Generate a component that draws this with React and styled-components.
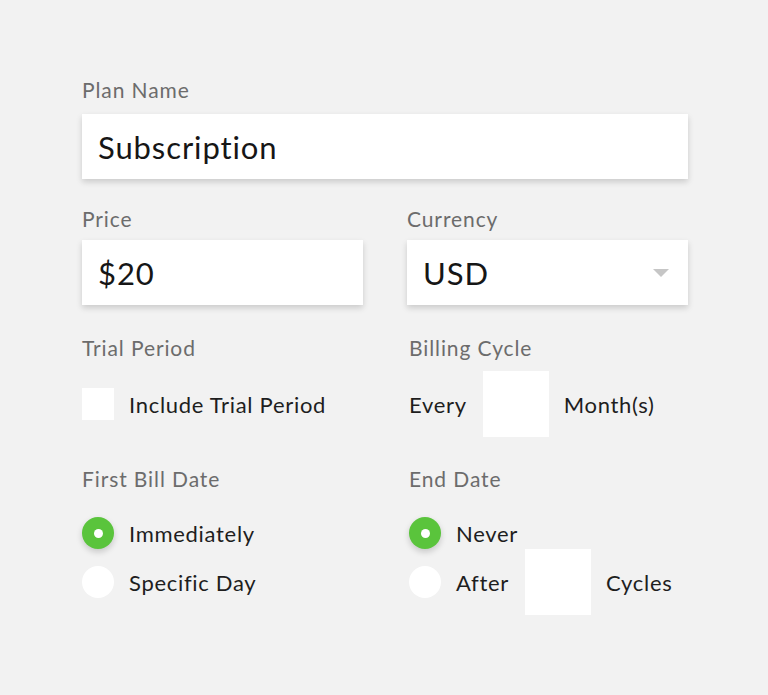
import React from "react";
import styled, { createGlobalStyle } from "styled-components";

const GlobalStyle = createGlobalStyle`
  * {
    box-sizing: border-box;
  }

  body {
    margin: 0;
    background: #f2f2f2;
    font-family: Lato, "Noto Sans", sans-serif;
  }
`;

const Page = styled.div`
  min-height: 695px;
  background: #f2f2f2;
  padding: 78px 0 0 82px;
`;

const Form = styled.form`
  width: 606px;
`;

const Section = styled.div`
  margin-top: ${(p) => p.$top || 0}px;
`;

const Columns = styled.div`
  display: grid;
  grid-template-columns: 281px 281px;
  column-gap: 44px;
  margin-top: ${(p) => p.$top || 0}px;
`;

const Column = styled.div`
  padding-left: ${(p) => p.$inset || 0}px;
`;

const Label = styled.div`
  font-size: 21px;
  line-height: 24px;
  letter-spacing: 0.9px;
  color: #6c6c6c;
  margin-bottom: ${(p) => p.$gap || 10}px;
`;

const Field = styled.div`
  position: relative;
  height: 65px;
  background: #fff;
  box-shadow: 0 3px 6px rgba(0, 0, 0, 0.16);
  display: flex;
  align-items: center;
  padding: 0 16px;
  font-size: 31px;
  letter-spacing: 0.9px;
  color: #161616;
`;

const Caret = styled.span`
  margin-left: auto;
  margin-right: 3px;
  width: 0;
  height: 0;
  border-left: 8px solid transparent;
  border-right: 8px solid transparent;
  border-top: 8px solid #c6c6c6;
`;

const Row = styled.div`
  display: flex;
  align-items: center;
  height: ${(p) => p.$h || 32}px;
  font-size: 22px;
  letter-spacing: 0.7px;
  color: #1e1e1e;
`;

const Checkbox = styled.span`
  width: 32px;
  height: 32px;
  background: #fff;
  margin-right: 15px;
  flex: none;
`;

const NumberBox = styled.span`
  width: 66px;
  height: 66px;
  background: #fff;
  margin: 0 15px 0 16px;
  flex: none;
`;

const Radio = styled.span`
  width: 32px;
  height: 32px;
  border-radius: 50%;
  margin-right: 15px;
  flex: none;
  display: flex;
  align-items: center;
  justify-content: center;
  background: ${(p) => (p.$on ? "#5ac43c" : "#fff")};
  box-shadow: ${(p) => (p.$on ? "0 3px 6px rgba(0, 0, 0, 0.18)" : "none")};

  &::after {
    content: "";
    width: 9px;
    height: 9px;
    border-radius: 50%;
    background: #fff;
    display: ${(p) => (p.$on ? "block" : "none")};
  }
`;

export default function App() {
  return (
    <>
      <GlobalStyle />
      <Page>
        <Form>
          <Section>
            <Label $gap={12}>Plan Name</Label>
            <Field>Subscription</Field>
          </Section>

          <Columns $top={28}>
            <Column>
              <Label $gap={9}>Price</Label>
              <Field>$20</Field>
            </Column>
            <Column>
              <Label $gap={9}>Currency</Label>
              <Field>
                USD
                <Caret />
              </Field>
            </Column>
          </Columns>

          <Columns $top={31}>
            <Column>
              <Label $gap={11}>Trial Period</Label>
              <Row $h={66}>
                <Checkbox />
                Include Trial Period
              </Row>
            </Column>
            <Column $inset={2}>
              <Label $gap={11}>Billing Cycle</Label>
              <Row $h={66}>
                Every
                <NumberBox />
                Month(s)
              </Row>
            </Column>
          </Columns>

          <Columns $top={30}>
            <Column>
              <Label $gap={26}>First Bill Date</Label>
              <Row>
                <Radio $on />
                Immediately
              </Row>
              <Row $h={66}>
                <Radio />
                Specific Day
              </Row>
            </Column>
            <Column $inset={2}>
              <Label $gap={26}>End Date</Label>
              <Row>
                <Radio $on />
                Never
              </Row>
              <Row $h={66}>
                <Radio />
                After
                <NumberBox />
                Cycles
              </Row>
            </Column>
          </Columns>
        </Form>
      </Page>
    </>
  );
}
